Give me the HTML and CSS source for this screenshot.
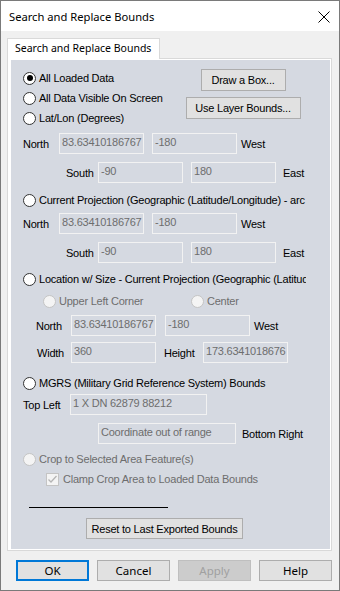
FILE: index.html
```html
<!DOCTYPE html>
<html>
<head>
<meta charset="utf-8">
<link rel="stylesheet" href="styles.css">
</head>
<body>
<div class="window">
  <div class="titlebar">
    <span class="title">Search and Replace Bounds</span>
    <svg class="close" width="12" height="12" viewBox="0 0 12 12"><path d="M0.5 0.5 L11.5 11.5 M11.5 0.5 L0.5 11.5" stroke="#000" stroke-width="1" fill="none"/></svg>
  </div>
  <div class="tabs">
    <div class="tab">Search and Replace Bounds</div>
    <div class="panel">
      <div class="content">
        <div class="top">
          <div class="top-left">
            <div class="radio-row"><span class="radio checked"></span><span class="rlabel">All Loaded Data</span></div>
            <div class="radio-row"><span class="radio"></span><span class="rlabel">All Data Visible On Screen</span></div>
            <div class="radio-row"><span class="radio"></span><span class="rlabel">Lat/Lon (Degrees)</span></div>
          </div>
          <div class="top-right">
            <div class="btn btn-draw">Draw a Box...</div>
            <div class="btn btn-layer">Use Layer Bounds...</div>
          </div>
        </div>

        <div class="field-row row-n1">
          <span class="lbl lbl-north">North</span>
          <span class="box">83.63410186767</span>
          <span class="box box-gap8">-180</span>
          <span class="after after-west">West</span>
        </div>
        <div class="field-row row-s1">
          <span class="lbl lbl-south">South</span>
          <span class="box">-90</span>
          <span class="box box-gap8">180</span>
          <span class="after after-east">East</span>
        </div>

        <div class="radio-row row-cp"><span class="radio"></span><span class="rlabel">Current Projection (Geographic (Latitude/Longitude) - arc degrees)</span></div>
        <div class="field-row row-n2">
          <span class="lbl lbl-north">North</span>
          <span class="box">83.63410186767</span>
          <span class="box box-gap8">-180</span>
          <span class="after after-west">West</span>
        </div>
        <div class="field-row row-s2">
          <span class="lbl lbl-south">South</span>
          <span class="box">-90</span>
          <span class="box box-gap8">180</span>
          <span class="after after-east">East</span>
        </div>

        <div class="radio-row row-loc"><span class="radio"></span><span class="rlabel">Location w/ Size - Current Projection (Geographic (Latitude/Longitude))</span></div>
        <div class="sub-radios">
          <div class="sub-radio sub-ul"><span class="radio disabled"></span><span class="rlabel dis">Upper Left Corner</span></div>
          <div class="sub-radio"><span class="radio disabled"></span><span class="rlabel dis">Center</span></div>
        </div>
        <div class="field-row row-n3">
          <span class="lbl lbl-north3">North</span>
          <span class="box">83.63410186767</span>
          <span class="box box-gap9">-180</span>
          <span class="after after-west3">West</span>
        </div>
        <div class="field-row row-w">
          <span class="lbl lbl-width">Width</span>
          <span class="box">360</span>
          <span class="lbl lbl-height">Height</span>
          <span class="box">173.6341018676</span>
        </div>

        <div class="radio-row row-mgrs"><span class="radio"></span><span class="rlabel">MGRS (Military Grid Reference System) Bounds</span></div>
        <div class="field-row row-tl">
          <span class="lbl lbl-tl">Top Left</span>
          <span class="box box-wide">1 X DN 62879 88212</span>
        </div>
        <div class="field-row row-br">
          <span class="box box-wide2">Coordinate out of range</span>
          <span class="after after-br">Bottom Right</span>
        </div>

        <div class="radio-row row-crop"><span class="radio disabled"></span><span class="rlabel dis">Crop to Selected Area Feature(s)</span></div>
        <div class="check-row">
          <span class="check"><svg width="11" height="11" viewBox="0 0 11 11"><path d="M1.5 5.5 L4 8 L9.5 2" stroke="#b5b5b5" stroke-width="1.3" fill="none"/></svg></span>
          <span class="rlabel dis">Clamp Crop Area to Loaded Data Bounds</span>
        </div>
        <div class="rule"></div>
        <div class="btn btn-reset">Reset to Last Exported Bounds</div>
      </div>
    </div>
  </div>
  <div class="footer">
    <div class="fbtn fbtn-default">OK</div>
    <div class="fbtn">Cancel</div>
    <div class="fbtn fbtn-disabled">Apply</div>
    <div class="fbtn">Help</div>
  </div>
</div>
</body>
</html>
```
FILE: styles.css
```css
* { box-sizing: border-box; }
html, body { margin: 0; padding: 0; }
body {
  width: 340px;
  height: 591px;
  overflow: hidden;
  font-family: "Liberation Sans", Arial, sans-serif;
  font-size: 11px;
  letter-spacing: -0.22px;
  color: #000;
}
.window {
  width: 340px;
  height: 591px;
  border: 1px solid #7a7a7a;
  background: #f0f0f0;
}
.titlebar {
  height: 30px;
  background: #fff;
  display: flex;
  align-items: center;
  justify-content: space-between;
  padding: 0 9px 0 8px;
}
.title {
  font-family: "Noto Sans", "Open Sans", sans-serif;
  font-size: 11.2px;
  letter-spacing: 0;
  color: #000;
  white-space: nowrap;
}
.close { display: block; margin-top: 1px; }

.tabs { margin: 7px 0 0 6px; width: 325px; }
.tab {
  width: 153px;
  height: 21px;
  background: #fff;
  border: 1px solid #d9d9d9;
  border-bottom: none;
  font-family: "Noto Sans", "Open Sans", sans-serif;
  font-size: 10.5px;
  letter-spacing: 0;
  line-height: 19px;
  padding-left: 7px;
  white-space: nowrap;
  overflow: hidden;
  position: relative;
  z-index: 1;
  margin-bottom: -1px;
}
.panel {
  width: 325px;
  height: 493px;
  border: 1px solid #d9d9d9;
  background: #fff;
  padding: 1px 1px 1px 3px;
}
.content {
  background: #d5d9e1;
  height: 100%;
  overflow: hidden;
}

.top { display: flex; height: 68px; }
.top-left { width: 145px; padding-top: 8px; }
.top-right {
  flex: 1;
  display: flex;
  flex-direction: column;
  align-items: center;
  padding-top: 9px;
  gap: 6px;
}

.radio-row {
  height: 20px;
  display: flex;
  align-items: center;
  padding-left: 12px;
  white-space: nowrap;
  overflow: hidden;
  width: 295px;
}
.radio {
  flex: none;
  width: 13px;
  height: 13px;
  border-radius: 50%;
  border: 1px solid #333;
  background: #fff;
  position: relative;
}
.radio.checked::after {
  content: "";
  position: absolute;
  left: 2.5px;
  top: 2.5px;
  width: 6px;
  height: 6px;
  border-radius: 50%;
  background: #000;
}
.radio.disabled { border-color: #c4c4c4; background: #f4f4f4; }
.rlabel { margin-left: 3px; }
.dis { color: #6d6d6d; }

.btn {
  height: 22px;
  background: #e1e1e1;
  border: 1px solid #adadad;
  display: flex;
  align-items: center;
  justify-content: center;
  white-space: nowrap;
}
.btn-draw { width: 85px; }
.btn-layer { width: 115px; }

.field-row {
  height: 21px;
  display: flex;
  align-items: center;
  white-space: nowrap;
}
.box {
  flex: none;
  width: 85px;
  height: 21px;
  border: 1px solid #f2f2f2;
  color: #6d6d6d;
  padding: 2px 0 0 2px;
  line-height: 13px;
  overflow: hidden;
}
.box-gap8 { margin-left: 8px; }
.box-gap9 { margin-left: 9px; }
.box-wide { width: 137px; }
.box-wide2 { width: 138px; }
.lbl { flex: none; }
.lbl-north { margin-left: 12px; width: 36px; }
.lbl-south { margin-left: 55px; width: 32px; }
.lbl-north3 { margin-left: 25px; width: 35px; }
.lbl-width { margin-left: 26px; width: 34px; }
.lbl-height { margin-left: 8px; width: 39px; }
.lbl-tl { margin-left: 12px; width: 47px; }
.after-west { margin-left: 4px; }
.after-east { margin-left: 7px; }
.after-west3 { margin-left: 4px; }
.after-br { margin-left: 6px; }

.row-n1 { margin-top: 5px; }
.row-s1 { margin-top: 8px; }
.row-cp { margin-top: 7px; }
.row-n2 { margin-top: 3px; }
.row-s2 { margin-top: 8px; }
.row-loc { margin-top: 6px; }
.sub-radios { display: flex; height: 20px; margin-top: 2px; align-items: center; }
.sub-radio { display: flex; align-items: center; }
.sub-ul { margin-left: 32px; width: 148px; }
.row-n3 { margin-top: 4px; }
.row-w { margin-top: 6px; }
.row-mgrs { margin-top: 10px; }
.row-tl { margin-top: 1px; }
.row-br { margin-top: 8px; padding-left: 87px; }
.row-crop { margin-top: 5px; }

.check-row {
  height: 20px;
  display: flex;
  align-items: center;
  padding-left: 35px;
}
.check {
  width: 13px;
  height: 13px;
  border: 1px solid #c4c4c4;
  background: #f4f4f4;
  display: flex;
  align-items: center;
  justify-content: center;
}
.check-row .rlabel { margin-left: 4px; }

.rule {
  margin: 18px 0 0 18px;
  width: 139px;
  height: 1px;
  background: #000;
}
.btn-reset {
  margin: 10px 0 0 75px;
  width: 157px;
  height: 21px;
}

.footer {
  display: flex;
  gap: 8px;
  padding-left: 15px;
  margin-top: 9px;
}
.fbtn {
  width: 73px;
  height: 21px;
  background: #e1e1e1;
  border: 1px solid #adadad;
  display: flex;
  align-items: center;
  justify-content: center;
  font-family: "Noto Sans", "Open Sans", sans-serif;
  font-size: 11.5px;
  letter-spacing: 0;
}
.fbtn-default { border: 2px solid #0078d7; }
.fbtn-disabled { background: #cccccc; border-color: #bfbfbf; color: #a0a0a0; }
```
